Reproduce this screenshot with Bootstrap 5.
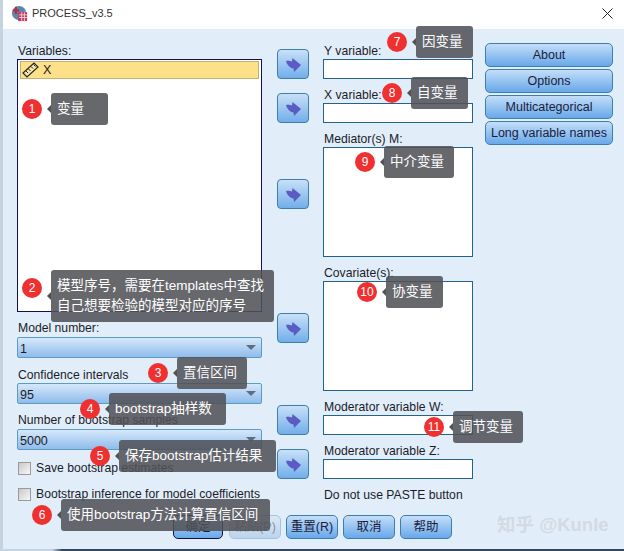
<!DOCTYPE html>
<html lang="en">
<head>
  <meta charset="UTF-8">
  <title>PROCESS_v3.5</title>
  <link href="https://cdn.jsdelivr.net/npm/bootstrap@5.3.0/dist/css/bootstrap.min.css" rel="stylesheet">
  <style>
    html, body { width: 624px; height: 551px; overflow: hidden; background: #fff; }
    body { font-family: "Liberation Sans", "Noto Sans CJK SC", sans-serif; font-size: 12.2px; color: #1c1c28; }
    #dlg { position: relative; width: 624px; height: 551px; padding-left: 3px; background: #c5d2e0; }
    .title-bar { height: 29px; background: #fff; padding: 0 11px 2px 8px; font-size: 11px; color: #333; }
    .title-ico { margin-right: 4px; }
    .dlg-body { height: 522px; background: #e1eefa; padding-left: 14px; border-bottom: 2px solid #34465c; border-image: linear-gradient(to right, #c5d2e0 50px, #34465c 60px) 1; }
    .dlg-main { height: 486px; padding-top: 14px; }
    .col-left { width: 245px; margin-right: 15px; }
    .col-arrows { width: 32px; margin-right: 14px; padding-top: 6px; }
    .col-fields { width: 150px; margin-right: 12px; }
    .col-side { width: 128px; }
    .lbl { height: 16px; line-height: 16px; white-space: nowrap; padding-left: 1px; }
    .var-list { height: 253px; background: #fff; border: 1px solid #12124e; padding: 1px 2px; }
    .var-sel { height: 18px; background: #fde08a; border: 1px solid #c4b170; padding-left: 1px; font-size: 12.5px; line-height: 16px; }
    .var-ico { margin-right: 3px; }
    .combo { height: 21px; margin-top: 1px; border: 1px solid #5b9cc6; border-radius: 2px; padding: 0 2px; font-size: 12.5px; line-height: 22px; background: linear-gradient(#d6e8fa, #8fbcec); position: relative; }
    .combo::after { content: ""; position: absolute; right: 5px; top: 7px; border: 5px solid transparent; border-top: 5px solid #5c6f80; border-bottom: 0; width: 0; }
    .combo-tight { margin-top: 0; }
    .lbl-gap { margin-top: 8px; }
    .lbl-gap2 { margin-top: 9px; }
    .chk-box { width: 13px; height: 13px; background: linear-gradient(135deg, #c8c8c8, #f8f8f8); border: 1px solid #9a9a9a; margin-left: 1px; margin-right: 5px; flex: none; }
    .chk-row { height: 14px; line-height: 14px; white-space: nowrap; }
    .chk-one { margin-top: 11px; }
    .chk-two { margin-top: 12px; }
    .arrow-btn { width: 32px; height: 30px; padding: 0; border: 1px solid #3d7fa8; border-radius: 4px; background: linear-gradient(#c8e0f8, #72aeea); }
    .a2 { margin-top: 14px; }
    .a3 { margin-top: 56px; }
    .a4 { margin-top: 104px; }
    .a5 { margin-top: 62px; }
    .a6 { margin-top: 14px; }
    .field-one { height: 20px; background: #fff; border: 1px solid #24628a; }
    .field-box { height: 110px; background: #fff; border: 1px solid #24628a; }
    .f-gap { margin-top: 8px; }
    .side-btn { width: 128px; height: 24px; padding: 1px 0 0; margin-bottom: 2px; border: 1px solid #3d7fa8; border-radius: 5px; color: #1c1c3c; font-size: 12.5px; background: linear-gradient(#c4def8, #68a8ea); }
    .foot-row { padding-left: 156px; }
    .foot-btn { height: 24px; width: 52px; margin-right: 5px; padding: 0; border: 1px solid #3d7fa8; border-radius: 5px; font-size: 12.5px; color: #1c1c3c; background: linear-gradient(#c4def8, #68a8ea); }
    .foot-btn.is-default { width: 50px; margin-right: 6px; border: 1px solid #10103a; }
    .foot-btn.is-off { border-color: #a8c4dc; color: #8a949e; background: linear-gradient(#dbe8f5, #bcd4ec); }
    .zh-mark { position: absolute; left: 497px; top: 511px; font-size: 18.500px; font-weight: 700; color: #d4dae1; white-space: nowrap; }
    .note { position: absolute; display: flex; align-items: center; }
    .note-dot { width: 20px; height: 20px; border-radius: 50%; background: #ef3030; color: #fff; font-size: 12px; line-height: 20px; text-align: center; margin-right: 9px; flex: none; }
    .note-text { position: relative; background: rgba(80, 82, 86, .87); color: #fff; font-size: 13.5px; line-height: 20px; padding: 6px 10px 6px 6px; border-radius: 3px; white-space: nowrap; height: 32px; }
    .note-text::before { content: ""; position: absolute; left: -4px; top: 50%; margin-top: -4px; border: 4px solid transparent; border-left: 0; border-right: 4px solid #505256; }
    .note-text.two-line { height: 52px; }
    .n1 { left: 22px; top: 93px; }
    .n1 .note-text { padding-right: 24px; }
    .n2 { left: 22px; top: 270px; }
    .n2 .note-dot { margin-bottom: 16px; }
    .n3 { left: 148px; top: 357px; }
    .n4 { left: 80px; top: 393px; }
    .n4 .note-text, .n5 .note-text { padding-right: 14px; }
    .n5 { left: 90px; top: 440px; }
    .n6 { left: 32px; top: 499px; }
    .n6 .note-text { padding-right: 12px; }
    .n7 { left: 387px; top: 26px; }
    .n8 { left: 382px; top: 77px; }
    .n9 { left: 355px; top: 146px; }
    .n10 { left: 357px; top: 276px; }
    .n11 { left: 424px; top: 411px; }
  </style>
</head>
<body>
  <div id="dlg">
    <div class="title-bar d-flex align-items-center">
      <svg width="17" height="17" viewBox="0 0 19 19" class="title-ico">
        <circle cx="9" cy="9" r="8" fill="#5c87a8"/>
        <rect x="8" y="8" width="10" height="10" fill="#c23a5c"/>
        <path d="M9 11h9M9 14h9M12 8v10M15 8v10" stroke="#f3d5dc" stroke-width="1"/>
        <path d="M2 6h7M5.500 2v8" stroke="#c2203c" stroke-width="2"/>
      </svg>
      <span>PROCESS_v3.5</span>
      <svg width="11" height="11" viewBox="0 0 11 11" class="ms-auto">
        <path d="M.5 .5l10 10M10.500 .5l-10 10" stroke="#222" stroke-width="1"/>
      </svg>
    </div>
    <div class="dlg-body">
      <div class="dlg-main d-flex">
        <div class="col-left">
          <div class="lbl">Variables:</div>
          <div class="var-list">
            <div class="var-sel d-flex align-items-center">
              <svg width="18" height="16" viewBox="0 0 18 16" class="var-ico">
                <path d="M1 11L12 1l4 4L5 15z" fill="#f6e8b0" stroke="#2a2612" stroke-width="1.200"/>
                <path d="M4 9l2 2M6.500 7l2 2M9 4.500l2 2M11.500 2.500l2 2" stroke="#2a2612" stroke-width="1"/>
              </svg>
              <span>X</span>
            </div>
          </div>
          <div class="lbl lbl-gap">Model number:</div>
          <div class="combo">1</div>
          <div class="lbl lbl-gap2">Confidence intervals</div>
          <div class="combo combo-tight">95</div>
          <div class="lbl lbl-gap">Number of bootstrap samples</div>
          <div class="combo">5000</div>
          <div class="chk-row chk-one d-flex align-items-center"><span class="chk-box"></span>Save bootstrap estimates</div>
          <div class="chk-row chk-two d-flex align-items-center"><span class="chk-box"></span>Bootstrap inference for model coefficients</div>
        </div>
        <div class="col-arrows d-flex flex-column">
          <button class="arrow-btn" type="button"><svg width="15" height="14" viewBox="0 0 15 14"><path d="M0 3c2-.5 4-.5 6 .5L6.500 0 15 7l-7 7-.5-3.500C4 10 1 7 0 3z" fill="#5a5cc4"/></svg></button>
          <button class="arrow-btn a2" type="button"><svg width="15" height="14" viewBox="0 0 15 14"><path d="M0 3c2-.5 4-.5 6 .5L6.500 0 15 7l-7 7-.5-3.500C4 10 1 7 0 3z" fill="#5a5cc4"/></svg></button>
          <button class="arrow-btn a3" type="button"><svg width="15" height="14" viewBox="0 0 15 14"><path d="M0 3c2-.5 4-.5 6 .5L6.500 0 15 7l-7 7-.5-3.500C4 10 1 7 0 3z" fill="#5a5cc4"/></svg></button>
          <button class="arrow-btn a4" type="button"><svg width="15" height="14" viewBox="0 0 15 14"><path d="M0 3c2-.5 4-.5 6 .5L6.500 0 15 7l-7 7-.5-3.500C4 10 1 7 0 3z" fill="#5a5cc4"/></svg></button>
          <button class="arrow-btn a5" type="button"><svg width="15" height="14" viewBox="0 0 15 14"><path d="M0 3c2-.5 4-.5 6 .5L6.500 0 15 7l-7 7-.5-3.500C4 10 1 7 0 3z" fill="#5a5cc4"/></svg></button>
          <button class="arrow-btn a6" type="button"><svg width="15" height="14" viewBox="0 0 15 14"><path d="M0 3c2-.5 4-.5 6 .5L6.500 0 15 7l-7 7-.5-3.500C4 10 1 7 0 3z" fill="#5a5cc4"/></svg></button>
        </div>
        <div class="col-fields">
          <div class="lbl">Y variable:</div>
          <div class="field-one"></div>
          <div class="lbl f-gap">X variable:</div>
          <div class="field-one"></div>
          <div class="lbl f-gap">Mediator(s) M:</div>
          <div class="field-box"></div>
          <div class="lbl f-gap">Covariate(s):</div>
          <div class="field-box"></div>
          <div class="lbl f-gap">Moderator variable W:</div>
          <div class="field-one"></div>
          <div class="lbl f-gap">Moderator variable Z:</div>
          <div class="field-one"></div>
          <div class="lbl f-gap">Do not use PASTE button</div>
        </div>
        <div class="col-side d-flex flex-column">
          <button class="side-btn" type="button">About</button>
          <button class="side-btn" type="button">Options</button>
          <button class="side-btn" type="button">Multicategorical</button>
          <button class="side-btn" type="button">Long variable names</button>
        </div>
      </div>
      <div class="foot-row d-flex">
        <button class="foot-btn is-default" type="button">确定</button>
        <button class="foot-btn is-off" type="button">粘贴(P)</button>
        <button class="foot-btn" type="button">重置(R)</button>
        <button class="foot-btn" type="button">取消</button>
        <button class="foot-btn" type="button">帮助</button>
      </div>
    </div>

    <div class="zh-mark">知乎 @Kunle</div>

    <div class="note n1"><span class="note-dot">1</span><span class="note-text">变量</span></div>
    <div class="note n2"><span class="note-dot">2</span><span class="note-text two-line">模型序号，需要在templates中查找<br>自己想要检验的模型对应的序号</span></div>
    <div class="note n3"><span class="note-dot">3</span><span class="note-text">置信区间</span></div>
    <div class="note n4"><span class="note-dot">4</span><span class="note-text">bootstrap抽样数</span></div>
    <div class="note n5"><span class="note-dot">5</span><span class="note-text">保存bootstrap估计结果</span></div>
    <div class="note n6"><span class="note-dot">6</span><span class="note-text">使用bootstrap方法计算置信区间</span></div>
    <div class="note n7"><span class="note-dot">7</span><span class="note-text">因变量</span></div>
    <div class="note n8"><span class="note-dot">8</span><span class="note-text">自变量</span></div>
    <div class="note n9"><span class="note-dot">9</span><span class="note-text">中介变量</span></div>
    <div class="note n10"><span class="note-dot">10</span><span class="note-text">协变量</span></div>
    <div class="note n11"><span class="note-dot">11</span><span class="note-text">调节变量</span></div>
  </div>
</body>
</html>
